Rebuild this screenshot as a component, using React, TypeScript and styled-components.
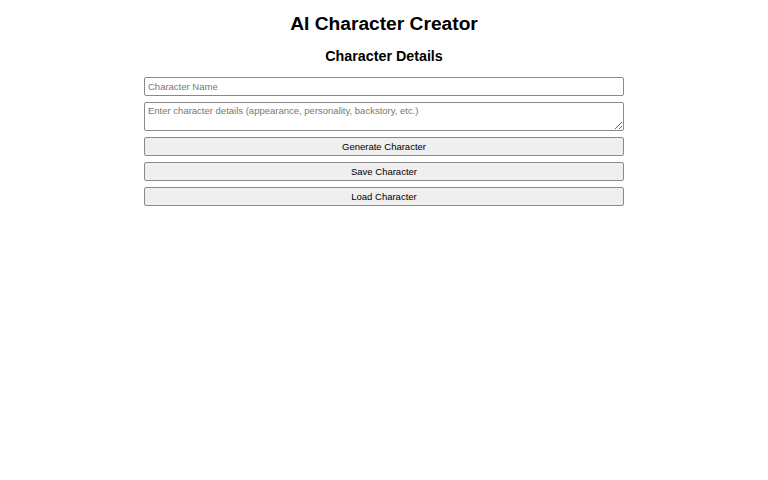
import React from "react";
import styled, { createGlobalStyle } from "styled-components";

const Global = createGlobalStyle`
  html, body { margin: 0; padding: 0; background: #ffffff; }
  body { font-family: "Liberation Sans", Arial, sans-serif; color: #000; }
`;

const Page = styled.main`
  width: 480px;
  margin: 0 auto;
  padding-top: 13px;
  display: flex;
  flex-direction: column;
`;

const Title = styled.h1`
  margin: 0;
  font-size: 19.2px;
  line-height: 22px;
  font-weight: 700;
  text-align: center;
`;

const Section = styled.h2`
  margin: 13px 0 0;
  font-size: 14.3px;
  line-height: 16px;
  font-weight: 700;
  text-align: center;
`;

const Form = styled.div`
  margin-top: 13px;
  display: flex;
  flex-direction: column;
  gap: 6px;
`;

const TextField = styled.input`
  box-sizing: border-box;
  width: 100%;
  height: 19px;
  margin: 0;
  padding: 1px 3px;
  font-family: "Liberation Sans", Arial, sans-serif;
  font-size: 9.5px;
  border: 1px solid #8a8a8a;
  border-radius: 2px;
  &::placeholder { color: #777777; }
`;

const TextArea = styled.textarea`
  box-sizing: border-box;
  width: 100%;
  height: 29px;
  margin: 0;
  padding: 2px 3px;
  font-family: "Liberation Sans", Arial, sans-serif;
  font-size: 9.5px;
  border: 1px solid #8a8a8a;
  border-radius: 2px;
  resize: vertical;
  &::placeholder { color: #777777; }
`;

const Action = styled.button`
  box-sizing: border-box;
  width: 100%;
  height: 19px;
  margin: 0;
  padding: 0 6px;
  font-family: "Liberation Sans", Arial, sans-serif;
  font-size: 9.5px;
  color: #000;
  background: #efefef;
  border: 1px solid #8a8a8a;
  border-radius: 2px;
`;

export default function App() {
  return (
    <>
      <Global />
      <Page>
        <Title>AI Character Creator</Title>
        <Section>Character Details</Section>
        <Form>
          <TextField placeholder="Character Name" />
          <TextArea placeholder="Enter character details (appearance, personality, backstory, etc.)" />
          <Action>Generate Character</Action>
          <Action>Save Character</Action>
          <Action>Load Character</Action>
        </Form>
      </Page>
    </>
  );
}
